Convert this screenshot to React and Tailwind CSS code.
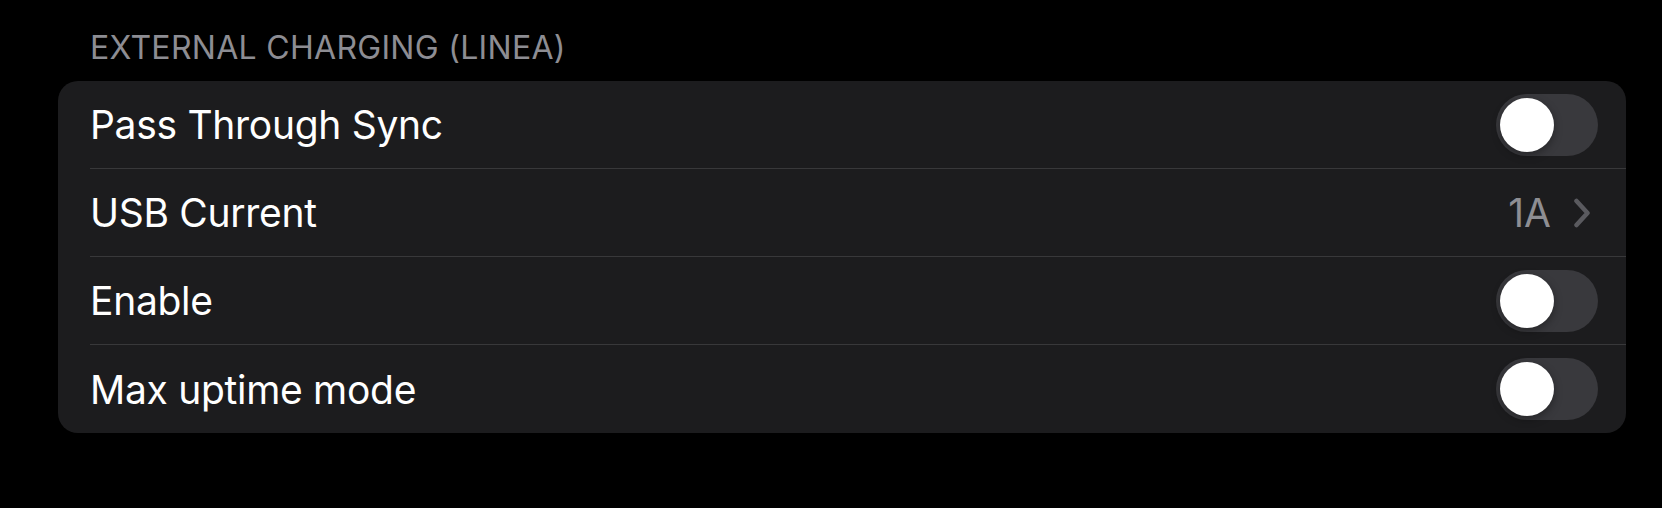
const rows = [
  { label: 'Pass Through Sync', type: 'toggle' },
  { label: 'USB Current', type: 'value', value: '1A' },
  { label: 'Enable', type: 'toggle' },
  { label: 'Max uptime mode', type: 'toggle' },
]

function Toggle() {
  return (
    <div className="w-[102px] h-[62px] rounded-full bg-[#39393d] p-[4px] flex items-center">
      <div className="w-[54px] h-[54px] rounded-full bg-white shadow-[0_3px_8px_rgba(0,0,0,0.35)]" />
    </div>
  )
}

function Chevron() {
  return (
    <svg width="18" height="30" viewBox="0 0 18 30" fill="none" className="text-[#5a5a5f]">
      <path d="M3.5 3 L14.5 15 L3.5 27" stroke="currentColor" strokeWidth="4.5" strokeLinecap="round" strokeLinejoin="round" />
    </svg>
  )
}

export default function App() {
  return (
    <div className="w-[1662px] h-[508px] bg-black pt-[28px] pl-[58px] pr-[36px] font-['Inter','Liberation_Sans',sans-serif]">
      <div className="h-[40px] leading-[40px] pl-[32px] mb-[13px] text-[32px] text-[#8d8d93] uppercase tracking-[0.3px]">
        External Charging (Linea)
      </div>

      <div className="bg-[#1c1c1e] rounded-[20px] overflow-hidden">
        {rows.map((r, i) => (
          <div key={r.label} className="flex pl-[32px]">
            <div
              className={`flex-1 h-[88px] flex items-center justify-between pr-[28px] ${
                i < rows.length - 1 ? 'border-b-[1.5px] border-[#38383a]' : ''
              }`}
            >
              <span className="text-[39px] text-white tracking-[-0.3px] pt-[2px]">{r.label}</span>
              {r.type === 'toggle' ? (
                <Toggle />
              ) : (
                <div className="flex items-center gap-[22px] pr-[7px]">
                  <span className="text-[39px] text-[#8e8e93] pt-[2px]">{r.value}</span>
                  <Chevron />
                </div>
              )}
            </div>
          </div>
        ))}
      </div>
    </div>
  )
}
